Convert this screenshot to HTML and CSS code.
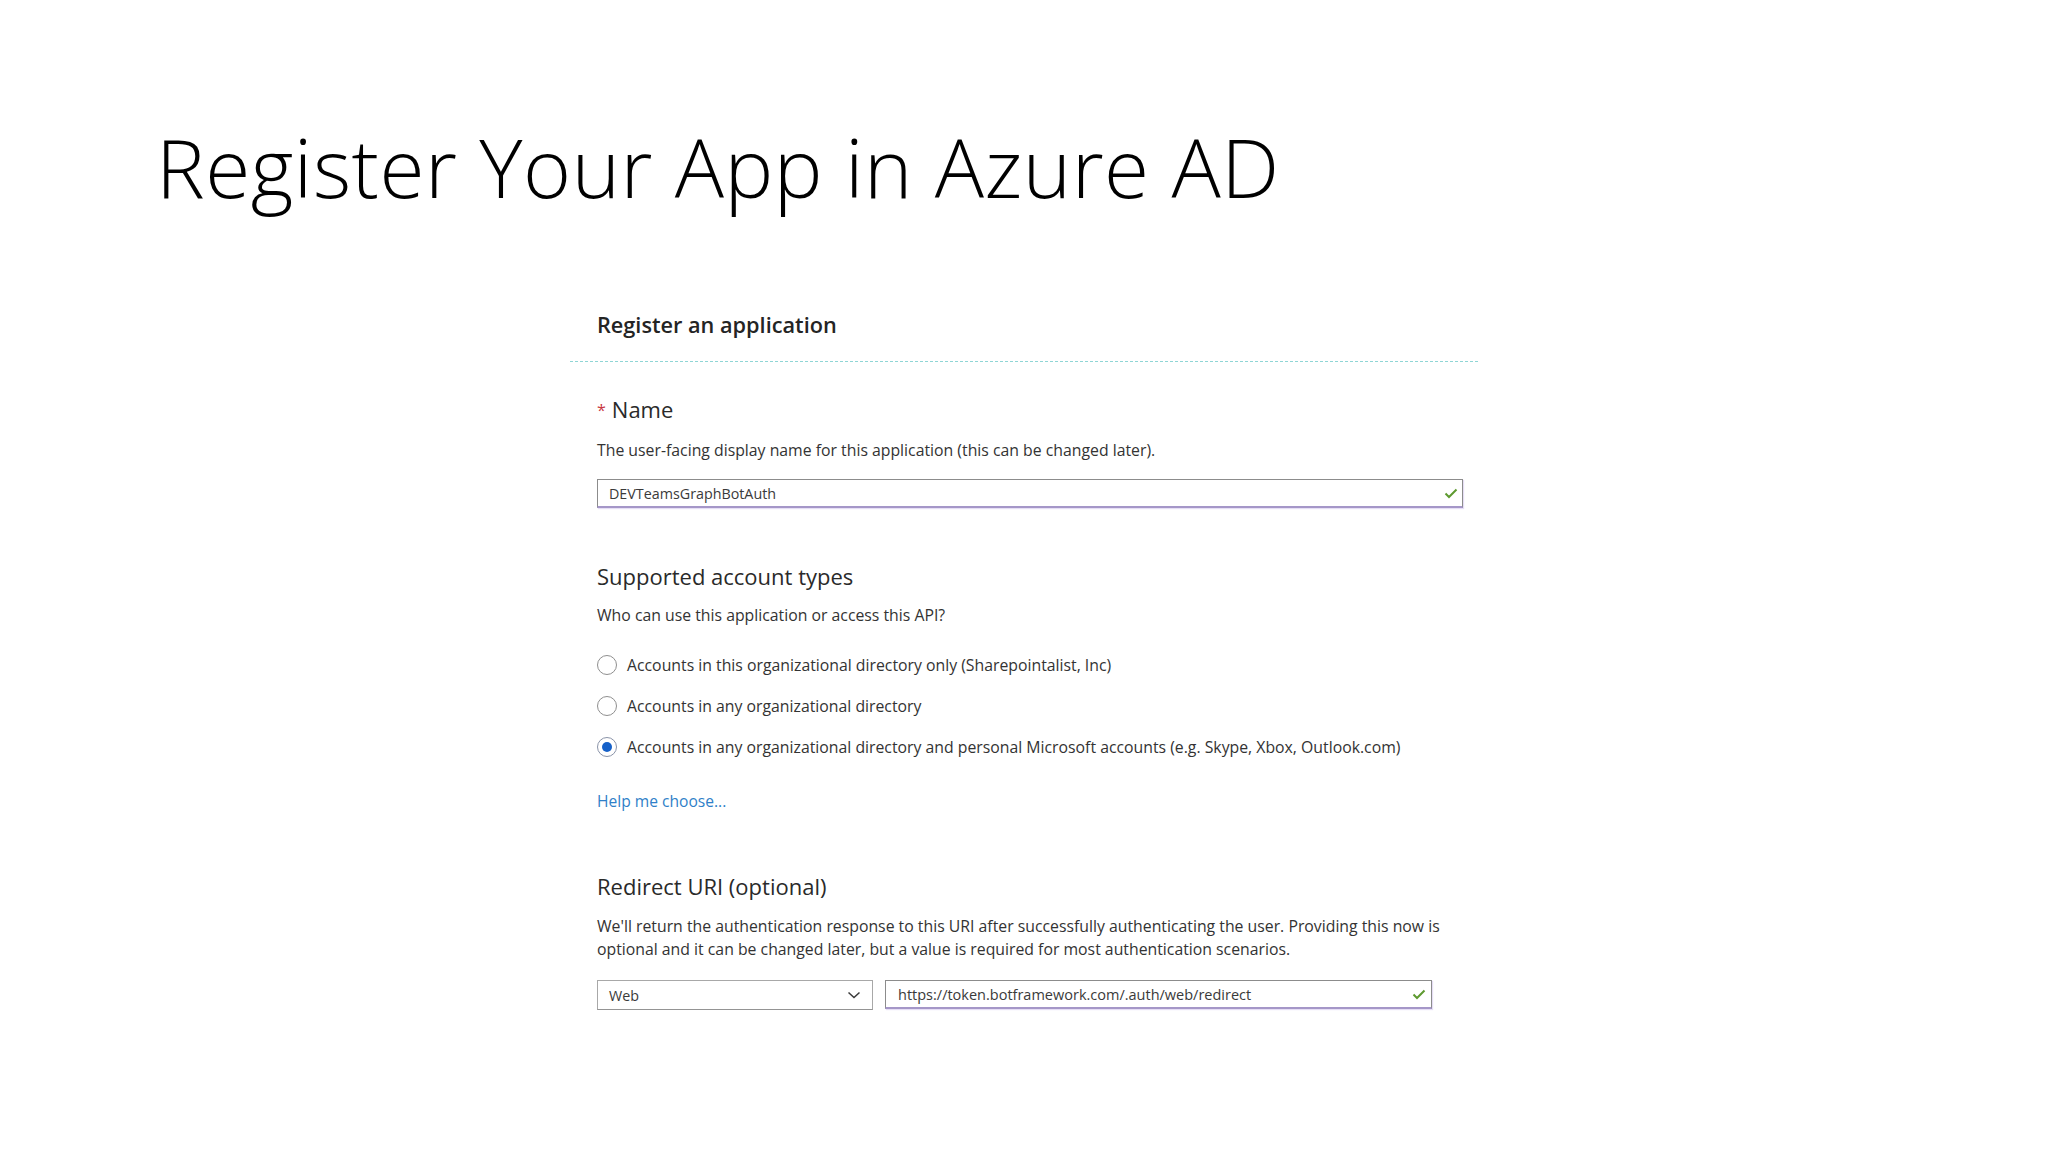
FILE: index.html
```html
<!DOCTYPE html>
<html lang="en">
<head>
<meta charset="utf-8">
<title>Register Your App in Azure AD</title>
<link rel="stylesheet" href="styles.css">
</head>
<body>
<div class="slide">
  <h1 class="title">Register Your App in Azure AD</h1>
  <div class="panel">
    <div class="panel-head">
      <h2>Register an application</h2>
    </div>
    <div class="panel-body">
      <div class="label label-first"><span class="req">*</span>Name</div>
      <p class="desc d-name">The user-facing display name for this application (this can be changed later).</p>
      <div class="field field-name">
        <span class="value">DEVTeamsGraphBotAuth</span>
        <svg class="check" width="14" height="11" viewBox="0 0 14 11"><path d="M1.5 5.5 L5 9 L12.5 1.5" fill="none" stroke="#5e9a30" stroke-width="2"/></svg>
      </div>

      <div class="label label-section">Supported account types</div>
      <p class="desc d-who">Who can use this application or access this API?</p>
      <div class="radios">
        <div class="radio-row"><span class="radio"></span><span>Accounts in this organizational directory only (Sharepointalist, Inc)</span></div>
        <div class="radio-row"><span class="radio"></span><span>Accounts in any organizational directory</span></div>
        <div class="radio-row"><span class="radio checked"></span><span>Accounts in any organizational directory and personal Microsoft accounts (e.g. Skype, Xbox, Outlook.com)</span></div>
      </div>
      <div class="link">Help me choose...</div>

      <div class="label label-redirect">Redirect URI (optional)</div>
      <p class="desc d-redirect">We'll return the authentication response to this URI after successfully authenticating the user. Providing this now is<br>optional and it can be changed later, but a value is required for most authentication scenarios.</p>
      <div class="uri-row">
        <div class="select">
          <span class="value">Web</span>
          <svg class="chev" width="14" height="8" viewBox="0 0 14 8"><path d="M1.5 1.5 L7 6.5 L12.5 1.5" fill="none" stroke="#3a3a3a" stroke-width="1.5"/></svg>
        </div>
        <div class="field field-uri">
          <span class="value">https://token.botframework.com/.auth/web/redirect</span>
          <svg class="check" width="14" height="11" viewBox="0 0 14 11"><path d="M1.5 5.5 L5 9 L12.5 1.5" fill="none" stroke="#5e9a30" stroke-width="2"/></svg>
        </div>
      </div>
    </div>
  </div>
</div>
</body>
</html>
```

FILE: styles.css
```css
html, body {
  margin: 0;
  padding: 0;
  background: #ffffff;
}
body {
  width: 2048px;
  height: 1152px;
  overflow: hidden;
  font-family: "Open Sans", "Noto Sans", sans-serif;
  color: #333333;
}
.slide {
  padding-top: 116px;
}
.title {
  margin: 0 0 0 156px;
  font-family: "Open Sans", "Noto Sans", sans-serif;
  font-weight: 300;
  font-size: 82px;
  line-height: 100px;
  letter-spacing: 0.5px;
  color: #000000;
}
.panel {
  margin: 94px 0 0 570px;
  width: 908px;
}
.panel-head {
  padding: 0 27px 21px;
  border-bottom: 1px dashed #8fd5d5;
}
.panel-head h2 {
  margin: 0;
  font-size: 21.7px;
  font-weight: 600;
  line-height: 30px;
  color: #242424;
}
.panel-body {
  padding: 0 27px;
}
.label {
  font-size: 22px;
  line-height: 28px;
  color: #2a2a2a;
}
.label-first { margin-top: 33px; }
.label-section { margin-top: 54px; }
.label-redirect { margin-top: 61px; }
.req {
  color: #c8393f;
  font-size: 16px;
  margin-right: 6px;
  vertical-align: 2px;
}
.desc {
  margin: 0;
  font-size: 15.8px;
  line-height: 20px;
  color: #333333;
}
.d-name { margin-top: 16px; }
.d-who { margin-top: 15px; }
.d-redirect { margin-top: 15px; line-height: 23px; }
.field, .select {
  box-sizing: border-box;
  display: flex;
  align-items: center;
  justify-content: space-between;
  background: #ffffff;
  color: #3a3a3a;
}
.field {
  border: 1px solid #8c8c8c;
  border-bottom: 2px solid #a597c8;
  box-shadow: 1px 1px 1px #e6def5;
}
.field-name {
  margin-top: 19px;
  width: 866px;
  height: 29px;
  padding: 0 4px 0 11px;
  font-size: 14.3px;
}
.check { display: block; }
.radios {
  margin-top: 30px;
  display: flex;
  flex-direction: column;
  gap: 21px;
}
.radio-row {
  display: flex;
  align-items: center;
  gap: 10px;
  height: 20px;
  font-size: 15.8px;
  line-height: 20px;
  color: #333333;
}
.radio {
  box-sizing: border-box;
  width: 20px;
  height: 20px;
  border: 1px solid #8f8f8f;
  border-radius: 50%;
  display: flex;
  align-items: center;
  justify-content: center;
  flex: none;
}
.radio.checked {
  border-color: #8a93a8;
}
.radio.checked::after {
  content: "";
  width: 10px;
  height: 10px;
  border-radius: 50%;
  background: #1560c8;
}
.link {
  margin-top: 34px;
  font-size: 15.6px;
  line-height: 20px;
  color: #2f7fc8;
}
.uri-row {
  margin-top: 19px;
  display: flex;
  align-items: flex-start;
  gap: 12px;
}
.select {
  width: 276px;
  height: 30px;
  padding: 0 11px 0 11px;
  border: 1px solid #a8a8a8;
  border-bottom-color: #949494;
  font-size: 14.3px;
}
.chev { display: block; }
.field-uri {
  width: 547px;
  height: 29px;
  padding: 0 5px 0 12px;
  font-size: 14.5px;
}
```
